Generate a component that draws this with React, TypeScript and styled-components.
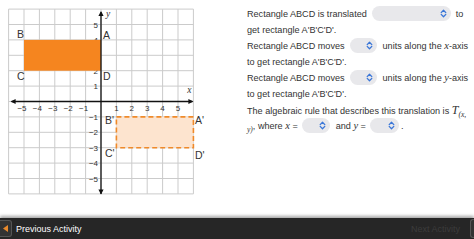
import styled, { createGlobalStyle } from "styled-components";

const GlobalStyle = createGlobalStyle`
  html, body {
    margin: 0;
    padding: 0;
    background: #ffffff;
  }
  body {
    font-family: "Liberation Sans", Arial, sans-serif;
  }
`;

const Page = styled.div`
  width: 474px;
  height: 239px;
  display: flex;
  flex-direction: column;
  overflow: hidden;
  background: #ffffff;
`;

const Main = styled.div`
  height: 218px;
  flex-shrink: 0;
  display: flex;
`;

const GraphColumn = styled.div`
  width: 247px;
  flex-shrink: 0;
  svg {
    display: block;
  }
`;

const TextColumn = styled.div`
  width: 224px;
  padding-top: 7px;
  color: #333333;
  font-size: 9.1px;
`;

const Para = styled.p`
  margin: 0 0 1px 0;
  line-height: 15.6px;
`;

const Var = styled.i`
  font-family: "Liberation Serif", "Times New Roman", serif;
  font-size: 10.5px;
  line-height: 1;
`;

const BigT = styled.i`
  font-family: "Liberation Serif", "Times New Roman", serif;
  font-size: 12px;
  line-height: 1;
`;

const Sub = styled.span`
  font-family: "Liberation Serif", "Times New Roman", serif;
  font-style: italic;
  font-size: 7.5px;
  line-height: 1;
  position: relative;
  top: 3px;
`;

const Select = styled.span<{ $w: number; $gapL?: number; $gapR?: number }>`
  display: inline-flex;
  align-items: center;
  justify-content: flex-end;
  box-sizing: border-box;
  width: ${(p) => p.$w}px;
  height: 15px;
  padding-right: 4px;
  margin-left: ${(p) => p.$gapL ?? 5}px;
  margin-right: ${(p) => p.$gapR ?? 5}px;
  vertical-align: middle;
  border-radius: 8px;
  background: #e8e8eb;
  position: relative;
  top: -1px;
`;

const Footer = styled.div`
  flex: 1;
  display: flex;
  align-items: center;
  justify-content: space-between;
  background: #262626;
  box-shadow: 0 -2px 3px rgba(0, 0, 0, 0.35);
  color: #ffffff;
  font-size: 9px;
`;

const NavButton = styled.div`
  display: flex;
  align-items: center;
  gap: 4px;
`;

const ArrowBox = styled.span`
  width: 12px;
  height: 17px;
  box-sizing: border-box;
  display: flex;
  align-items: center;
  justify-content: center;
  border: 1px solid #555555;
  border-left: none;
  border-radius: 0 3px 3px 0;
  background: #333333;
`;

const NextLabel = styled.span`
  color: #3c3c3c;
  margin-right: 6px;
`;

const NextBox = styled.span`
  width: 3px;
  height: 17px;
  border: 1px solid #555555;
  border-right: none;
  border-radius: 3px 0 0 3px;
  background: #333333;
`;

function UpDown() {
  return (
    <svg width="7" height="9" viewBox="0 0 7 9">
      <path
        d="M1.2 3.6 L3.5 1.3 L5.8 3.6 M1.2 5.4 L3.5 7.7 L5.8 5.4"
        fill="none"
        stroke="#3a76d8"
        strokeWidth="1.3"
        strokeLinecap="round"
        strokeLinejoin="round"
      />
    </svg>
  );
}

const OX = 101;
const OY = 101.5;
const U = 15.4;
const px = (x: number) => OX + x * U;
const py = (y: number) => OY - y * U;

function Graph() {
  const steps = Array.from({ length: 13 }, (_, i) => i - 6);
  const ticks = [-5, -4, -3, -2, -1, 1, 2, 3, 4, 5];
  const label = { fontFamily: "Liberation Sans, Arial, sans-serif", fill: "#333" };
  return (
    <svg width="247" height="218" viewBox="0 0 247 218">
      {steps.map((s) => (
        <g key={s}>
          <line x1={px(s)} y1={py(6)} x2={px(s)} y2={py(-6)} stroke="#cbcbcb" strokeWidth="1" />
          <line x1={px(-6)} y1={py(s)} x2={px(6)} y2={py(s)} stroke="#cbcbcb" strokeWidth="1" />
        </g>
      ))}

      {ticks.map((t) => (
        <text key={`x${t}`} x={px(t) - (t < 0 ? 2 : 0)} y={OY + 9.5} fontSize="8" textAnchor="middle" {...label}>
          {t < 0 ? `\u2212${-t}` : t}
        </text>
      ))}
      {ticks.map((t) => (
        <text key={`y${t}`} x={OX - 3} y={py(t) + 3} fontSize="8" textAnchor="end" {...label}>
          {t < 0 ? `\u2212${-t}` : t}
        </text>
      ))}

      <rect x={px(-5)} y={py(4)} width={5 * U} height={2 * U} fill="#f5851f" />
      <rect
        x={px(1)}
        y={py(-1)}
        width={5 * U}
        height={2 * U}
        fill="#fde4cf"
        stroke="#f08a2a"
        strokeWidth="1.6"
        strokeDasharray="5 3"
      />

      <line x1={px(-6) + 3} y1={OY} x2={px(6) - 1} y2={OY} stroke="#111" strokeWidth="1.3" />
      <path d={`M${px(-6) + 2} ${OY} l5 -2.6 v5.2 z`} fill="#111" />
      <path d={`M${px(6)} ${OY} l-5 -2.6 v5.2 z`} fill="#111" />
      <line x1={OX} y1={py(6) + 3} x2={OX} y2={py(-6)} stroke="#111" strokeWidth="1.3" />
      <path d={`M${OX} ${py(6) + 2} l-2.6 5 h5.2 z`} fill="#111" />
      <path d={`M${OX} ${py(-6) + 0.5} l-2.6 -5 h5.2 z`} fill="#111" />

      <text x={px(5.6)} y={py(0.55)} fontSize="9.5" fontStyle="italic" fontFamily="Liberation Serif, serif" fill="#333">
        x
      </text>
      <text x={OX + 5} y={py(5.5)} fontSize="9.5" fontStyle="italic" fontFamily="Liberation Serif, serif" fill="#333">
        y
      </text>

      <text x={17} y={38} fontSize="10.5" {...label}>B</text>
      <text x={103} y={39} fontSize="10.5" {...label}>A</text>
      <text x={17} y={80} fontSize="10.5" {...label}>C</text>
      <text x={103} y={80} fontSize="10.5" {...label}>D</text>
      <text x={105} y={124} fontSize="10.5" {...label}>B'</text>
      <text x={195} y={124} fontSize="10.5" {...label}>A'</text>
      <text x={105} y={157} fontSize="10.5" {...label}>C'</text>
      <text x={195} y={159} fontSize="10.5" {...label}>D'</text>
    </svg>
  );
}

export default function App() {
  return (
    <Page>
      <GlobalStyle />
      <Main>
        <GraphColumn>
          <Graph />
        </GraphColumn>
        <TextColumn>
          <Para>
            Rectangle ABCD is translated
            <Select $w={79}>
              <UpDown />
            </Select>
            to get rectangle A'B'C'D'.
          </Para>
          <Para>
            Rectangle ABCD moves
            <Select $w={27} $gapR={6}>
              <UpDown />
            </Select>
            units along the <Var>x</Var>-axis to get rectangle A'B'C'D'.
          </Para>
          <Para>
            Rectangle ABCD moves
            <Select $w={27} $gapR={6}>
              <UpDown />
            </Select>
            units along the <Var>y</Var>-axis to get rectangle A'B'C'D'.
          </Para>
          <Para>
            The algebraic rule that describes this translation is <BigT>T</BigT>
            <Sub>(x, y)</Sub>, where <Var>x</Var> =
            <Select $w={28} $gapL={4} $gapR={6}>
              <UpDown />
            </Select>
            and <Var>y</Var> =
            <Select $w={29} $gapL={4} $gapR={2}>
              <UpDown />
            </Select>
            .
          </Para>
        </TextColumn>
      </Main>
      <Footer>
        <NavButton>
          <ArrowBox>
            <svg width="5" height="7" viewBox="0 0 5 7">
              <path d="M5 0 L0 3.5 L5 7 Z" fill="#e8892c" />
            </svg>
          </ArrowBox>
          Previous Activity
        </NavButton>
        <NavButton>
          <NextLabel>Next Activity</NextLabel>
          <NextBox />
        </NavButton>
      </Footer>
    </Page>
  );
}
